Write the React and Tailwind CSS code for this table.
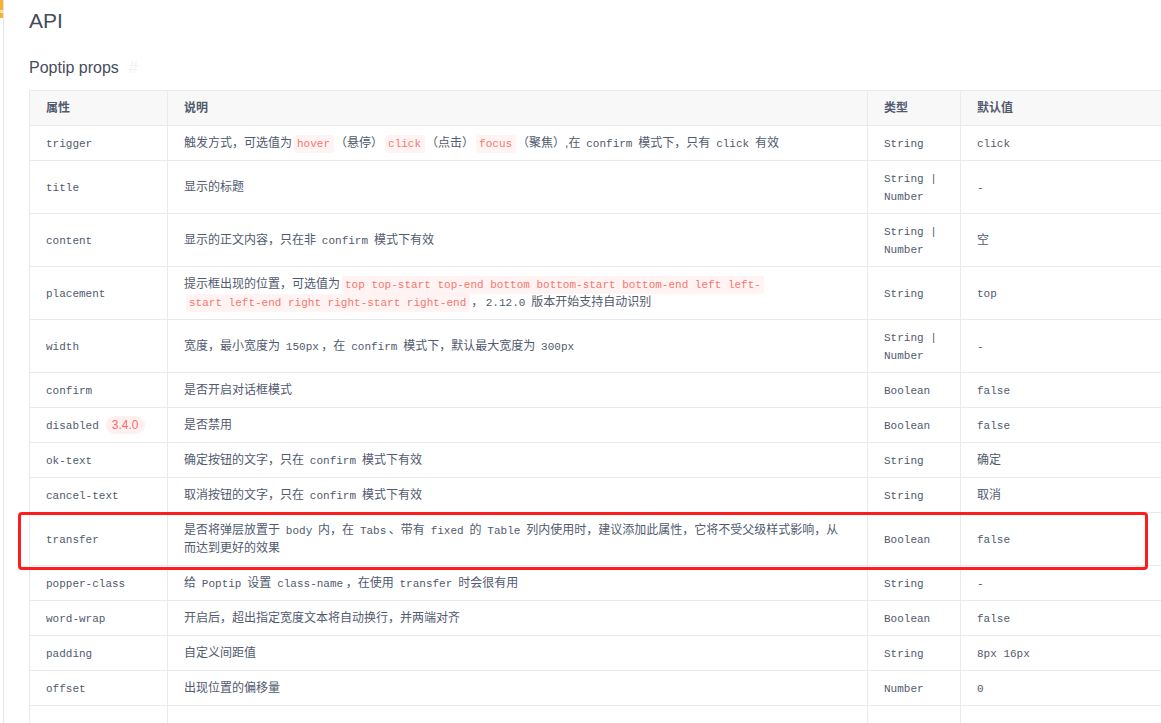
import React from "react";

const SANS = "font-['Liberation_Sans','Noto_Sans_CJK_SC',sans-serif]";
const MONO = "font-['Liberation_Mono','Noto_Sans_CJK_SC',monospace]";

const C = ({ children }) => (
  <code className={`${MONO} text-[11px] leading-[12px] text-[#515a6e] px-[2.5px]`}>{children}</code>
);

const H = ({ children }) => (
  <code
    className={`${MONO} text-[11px] leading-[12px] text-[#f7766d] bg-[#fff4f3] px-[3.5px] py-[3px] mx-[1.5px] rounded-[3px] [box-decoration-break:clone] [-webkit-box-decoration-break:clone]`}
  >
    {children}
  </code>
);

const M = ({ children }) => (
  <span className={`${MONO} text-[11px] leading-[12px] text-[#515a6e]`}>{children}</span>
);

const rows = [
  {
    name: "trigger",
    desc: (
      <>
        触发方式，可选值为<H>hover</H>（悬停）<H>click</H>（点击）<H>focus</H>（聚焦）,在 <C>confirm</C> 模式下，只有 <C>click</C> 有效
      </>
    ),
    type: <M>String</M>,
    def: <M>click</M>,
  },
  {
    name: "title",
    desc: <>显示的标题</>,
    type: <M>String | Number</M>,
    def: <M>-</M>,
  },
  {
    name: "content",
    desc: (
      <>
        显示的正文内容，只在非 <C>confirm</C> 模式下有效
      </>
    ),
    type: <M>String | Number</M>,
    def: <>空</>,
  },
  {
    name: "placement",
    desc: (
      <>
        提示框出现的位置，可选值为
        <H>
          top top-start top-end bottom bottom-start bottom-end left left-
          <br />
          start left-end right right-start right-end
        </H>
        ，<C>2.12.0</C> 版本开始支持自动识别
      </>
    ),
    type: <M>String</M>,
    def: <M>top</M>,
  },
  {
    name: "width",
    desc: (
      <>
        宽度，最小宽度为 <C>150px</C>，在 <C>confirm</C> 模式下，默认最大宽度为 <C>300px</C>
      </>
    ),
    type: <M>String | Number</M>,
    def: <M>-</M>,
  },
  {
    name: "confirm",
    desc: <>是否开启对话框模式</>,
    type: <M>Boolean</M>,
    def: <M>false</M>,
  },
  {
    name: "disabled",
    badge: "3.4.0",
    desc: <>是否禁用</>,
    type: <M>Boolean</M>,
    def: <M>false</M>,
  },
  {
    name: "ok-text",
    desc: (
      <>
        确定按钮的文字，只在 <C>confirm</C> 模式下有效
      </>
    ),
    type: <M>String</M>,
    def: <>确定</>,
  },
  {
    name: "cancel-text",
    desc: (
      <>
        取消按钮的文字，只在 <C>confirm</C> 模式下有效
      </>
    ),
    type: <M>String</M>,
    def: <>取消</>,
  },
  {
    name: "transfer",
    desc: (
      <>
        是否将弹层放置于 <C>body</C> 内，在 <C>Tabs</C>、带有 <C>fixed</C> 的 <C>Table</C> 列内使用时，建议添加此属性，它将不受父级样式影响，从
        <br />
        而达到更好的效果
      </>
    ),
    type: <M>Boolean</M>,
    def: <M>false</M>,
  },
  {
    name: "popper-class",
    desc: (
      <>
        给 <C>Poptip</C> 设置 <C>class-name</C>，在使用 <C>transfer</C> 时会很有用
      </>
    ),
    type: <M>String</M>,
    def: <M>-</M>,
  },
  {
    name: "word-wrap",
    desc: <>开启后，超出指定宽度文本将自动换行，并两端对齐</>,
    type: <M>Boolean</M>,
    def: <M>false</M>,
  },
  {
    name: "padding",
    desc: <>自定义间距值</>,
    type: <M>String</M>,
    def: <M>8px 16px</M>,
  },
  {
    name: "offset",
    desc: <>出现位置的偏移量</>,
    type: <M>Number</M>,
    def: <M>0</M>,
  },
];

const cell =
  "flex items-center px-4 py-2 border-r border-b border-[#e8eaec] leading-[18px] min-w-0";
const grid = "grid grid-cols-[138px_700px_93px_269px]";

export default function App() {
  return (
    <div
      className={`relative h-[723px] w-full overflow-hidden bg-white ${SANS} text-[12px] text-[#515a6e]`}
    >
      <div className="flex h-full">
        {/* left sidebar edge */}
        <div className="w-[3px] shrink-0 flex flex-col">
          <div className="h-[10px] bg-[#fbb02d]" />
          <div className="h-[3px] bg-[#fde2b0]" />
          <div className="h-[5px] bg-[#fbb02d]" />
        </div>
        <main className="flex-1 border-l border-[#e3e5e8] pl-[25px] min-w-0">
          <h2 className="mt-[7px] text-[21px] leading-[28px] font-normal text-[#464c5b]">
            API
          </h2>
          <h3 className="mt-[23px] text-[16px] leading-[20px] font-normal text-[#464c5b] flex items-center">
            Poptip props
            <span className="ml-[10px] text-[#eef1f6]">#</span>
          </h3>
          <div className="mt-[12px] w-[1200px] border-l border-t border-[#e8eaec]">
            <div className={`${grid} bg-[#f8f8f9] font-bold`}>
              <div className={cell}>属性</div>
              <div className={cell}>说明</div>
              <div className={cell}>类型</div>
              <div className={cell}>默认值</div>
            </div>
            {rows.map((r) => (
              <div key={r.name} className={grid}>
                <div className={cell}>
                  <div className="flex items-center">
                    <div>
                      <M>{r.name}</M>
                    </div>
                    {r.badge && (
                      <span className="ml-[7px] inline-flex items-center h-[18px] px-[6px] rounded-full bg-[#fff0f0] text-[#f86b6b] text-[12px]">
                        {r.badge}
                      </span>
                    )}
                  </div>
                </div>
                <div className={cell}>
                  <div>{r.desc}</div>
                </div>
                <div className={cell}>
                  <div>{r.type}</div>
                </div>
                <div className={cell}>
                  <div>{r.def}</div>
                </div>
              </div>
            ))}
            <div className={`${grid} h-[53px]`}>
              <div className={cell} />
              <div className={cell} />
              <div className={cell} />
              <div className={cell} />
            </div>
          </div>
        </main>
      </div>
      {/* red annotation box */}
      <div className="absolute left-[18px] top-[512px] w-[1130px] h-[58px] border-[3px] border-[#ff1c1c] rounded-[4px] pointer-events-none" />
    </div>
  );
}
